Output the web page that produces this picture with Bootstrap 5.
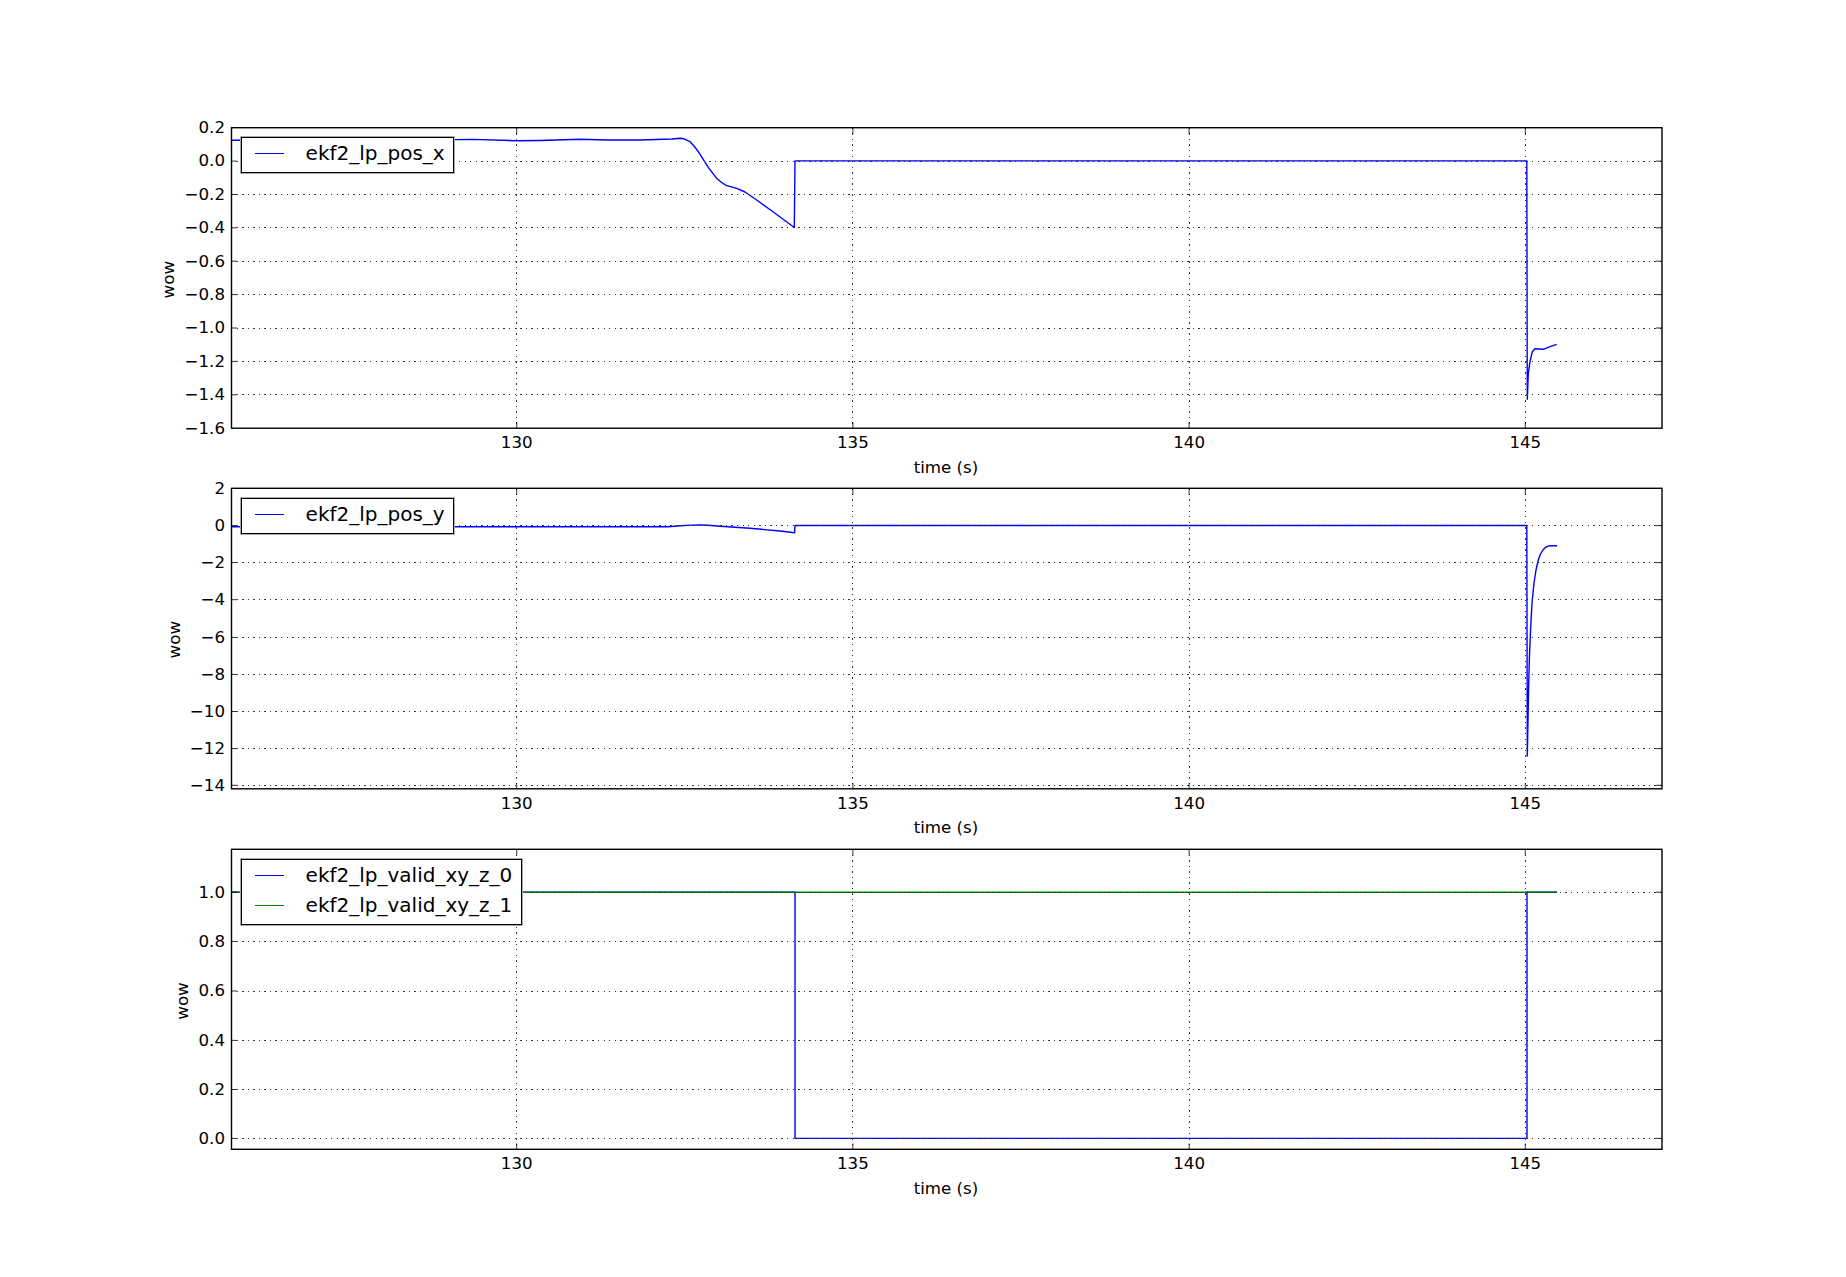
<!DOCTYPE html>
<html lang="en">
<head>
    <meta charset="UTF-8">
    <meta name="viewport" content="width=device-width, initial-scale=1.0">
    <title>ekf2 local position</title>
    <link href="https://cdn.jsdelivr.net/npm/bootstrap@5.3.0/dist/css/bootstrap.min.css" rel="stylesheet">
    <style>
        body {
            background: #fff;
        }
        .figure-page {
            width: 1846px;
            height: 1277px;
            padding-top: 127px;
        }
        .plot {
            width: 1846px;
            height: 361px;
        }
        .plot svg {
            display: block;
            overflow: visible;
        }
        .plot text {
            font-family: "DejaVu Sans", sans-serif;
            font-size: 16.67px;
            fill: #000;
        }
        .tick-y {
            text-anchor: end;
        }
        .tick-x, .axis-label {
            text-anchor: middle;
        }
        .grid {
            stroke: #333;
            stroke-width: 1;
            stroke-dasharray: 1.39 4.17;
            fill: none;
            shape-rendering: crispEdges;
        }
        .ticks {
            stroke: #000;
            stroke-width: .8;
            fill: none;
        }
        .frame {
            stroke: #000;
            stroke-width: 1.4;
            fill: none;
        }
        .trace {
            stroke-width: 1.4;
            fill: none;
            stroke-linejoin: round;
        }
        .trace-blue {
            stroke: #00f;
        }
        .trace-green {
            stroke: #008000;
        }
        .legend-box {
            top: 10px;
            left: 241px;
            padding: 2px 8.6px 2px 13px;
            background: #fff;
            border: 1px solid #000;
            box-shadow: 0 0 0 1px #aaa;
            font-family: "DejaVu Sans", sans-serif;
            font-size: 20px;
            color: #000;
        }
        .legend-row {
            height: 30px;
            padding-bottom: 3.4px;
            gap: 21.6px;
        }
        .legend-line {
            display: block;
            width: 29px;
            height: 1.4px;
        }
        .swatch-blue {
            background: #00f;
        }
        .swatch-green {
            background: #008000;
        }
    </style>
</head>
<body class="m-0">
    <main class="figure-page d-flex flex-column">

        <!-- ekf2_lp_pos_x -->
        <section class="plot position-relative">
            <svg width="1846" height="361" viewBox="0 127 1846 361">
                <path class="trace trace-blue" d="M231.5 140.3 L300 140 L453 139.6 L473 139.4 L516.7 140.7 L540 140.5 L580 139.3 L606.7 140 L640 140 L672 139 L680 138.2 L684 138.8 L690 141.7 L694 146 L698.3 151.7 L708.3 167.3 L716.7 178.3 L721 182 L726 185.3 L736.7 188.3 L745 192 L756.7 200 L773.3 212 L794.3 227.5 L795 160.9 L1526.8 160.9 L1527.3 399.3 L1528.3 373.3 L1530 361.7 L1532.3 351.7 L1535 348.7 L1543.3 349.3 L1550 346.7 L1556.7 344.3"/>
                <path class="grid" d="M231 161.1H1662M231 194.5H1662M231 227.8H1662M231 261.2H1662M231 294.6H1662M231 328H1662M231 361.4H1662M231 394.8H1662M516.7 127.7V428.2M852.9 127.7V428.2M1189.1 127.7V428.2M1525.3 127.7V428.2"/>
                <path class="ticks" d="M231 161.1h6M231 194.5h6M231 227.8h6M231 261.2h6M231 294.6h6M231 328h6M231 361.4h6M231 394.8h6M1662 161.1h-6M1662 194.5h-6M1662 227.8h-6M1662 261.2h-6M1662 294.6h-6M1662 328h-6M1662 361.4h-6M1662 394.8h-6M516.7 128v6M852.9 128v6M1189.1 128v6M1525.3 128v6M516.7 428v-6M852.9 428v-6M1189.1 428v-6M1525.3 428v-6"/>
                <rect class="frame" x="231.5" y="127.7" width="1430.5" height="300.5"/>
                <text class="tick-y" x="225" y="133">0.2</text>
                <text class="tick-y" x="225" y="166.4">0.0</text>
                <text class="tick-y" x="225" y="199.8">−0.2</text>
                <text class="tick-y" x="225" y="233.1">−0.4</text>
                <text class="tick-y" x="225" y="266.5">−0.6</text>
                <text class="tick-y" x="225" y="299.9">−0.8</text>
                <text class="tick-y" x="225" y="333.3">−1.0</text>
                <text class="tick-y" x="225" y="366.7">−1.2</text>
                <text class="tick-y" x="225" y="400.1">−1.4</text>
                <text class="tick-y" x="225" y="433.5">−1.6</text>
                <text class="tick-x" x="516.7" y="448.3">130</text>
                <text class="tick-x" x="852.9" y="448.3">135</text>
                <text class="tick-x" x="1189.1" y="448.3">140</text>
                <text class="tick-x" x="1525.3" y="448.3">145</text>
                <text class="axis-label" x="946" y="472.7">time (s)</text>
                <text class="axis-label" transform="translate(174.3 279.7) rotate(-90)">wow</text>
            </svg>
            <div class="legend-box position-absolute">
                <div class="legend-row d-flex align-items-center">
                    <span class="legend-line swatch-blue"></span>
                    <span>ekf2_lp_pos_x</span>
                </div>
            </div>
        </section>

        <!-- ekf2_lp_pos_y -->
        <section class="plot position-relative">
            <svg width="1846" height="361" viewBox="0 488 1846 361">
                <path class="trace trace-blue" d="M231.5 526.8 L668 526.8 L680 525.8 L692 525.1 L700 525 L708 525.2 L720 526.2 L750 528.3 L780 531 L794.6 532.8 L795 525.5 L1526.8 525.5 L1527.3 756 L1528 720 L1528.7 683 L1529.5 655 L1530.7 627 L1532 603 L1534 583 L1536 570 L1538.3 560 L1540.5 554 L1543.3 549.5 L1546 547 L1550 545.7 L1557 545.7"/>
                <path class="grid" d="M231 525.6H1662M231 562.6H1662M231 599.7H1662M231 637.4H1662M231 674.4H1662M231 711.5H1662M231 748.6H1662M231 785.3H1662M516.7 488.3V788.8M852.9 488.3V788.8M1189.1 488.3V788.8M1525.3 488.3V788.8"/>
                <path class="ticks" d="M231 525.6h6M231 562.6h6M231 599.7h6M231 637.4h6M231 674.4h6M231 711.5h6M231 748.6h6M231 785.3h6M1662 525.6h-6M1662 562.6h-6M1662 599.7h-6M1662 637.4h-6M1662 674.4h-6M1662 711.5h-6M1662 748.6h-6M1662 785.3h-6M516.7 489v6M852.9 489v6M1189.1 489v6M1525.3 489v6M516.7 789v-6M852.9 789v-6M1189.1 789v-6M1525.3 789v-6"/>
                <rect class="frame" x="231.5" y="488.3" width="1430.5" height="300.5"/>
                <text class="tick-y" x="225" y="493.8">2</text>
                <text class="tick-y" x="225" y="530.9">0</text>
                <text class="tick-y" x="225" y="567.9">−2</text>
                <text class="tick-y" x="225" y="605">−4</text>
                <text class="tick-y" x="225" y="642.7">−6</text>
                <text class="tick-y" x="225" y="679.7">−8</text>
                <text class="tick-y" x="225" y="716.8">−10</text>
                <text class="tick-y" x="225" y="753.9">−12</text>
                <text class="tick-y" x="225" y="790.6">−14</text>
                <text class="tick-x" x="516.7" y="809">130</text>
                <text class="tick-x" x="852.9" y="809">135</text>
                <text class="tick-x" x="1189.1" y="809">140</text>
                <text class="tick-x" x="1525.3" y="809">145</text>
                <text class="axis-label" x="946" y="833">time (s)</text>
                <text class="axis-label" transform="translate(179.7 639.7) rotate(-90)">wow</text>
            </svg>
            <div class="legend-box position-absolute">
                <div class="legend-row d-flex align-items-center">
                    <span class="legend-line swatch-blue"></span>
                    <span>ekf2_lp_pos_y</span>
                </div>
            </div>
        </section>

        <!-- ekf2_lp_valid_xy_z -->
        <section class="plot position-relative">
            <svg width="1846" height="361" viewBox="0 849 1846 361">
                <path class="trace trace-blue" d="M231.5 892.2 L795 892.2 L795 1138.4 L1527 1138.4 L1527 892.2 L1557 892.2"/>
                <path class="trace trace-green" d="M231.5 892.2 H1557"/>
                <path class="grid" d="M231 892.2H1662M231 941.4H1662M231 991H1662M231 1040.4H1662M231 1089.5H1662M231 1138.4H1662M516.7 849V1149.3M852.9 849V1149.3M1189.1 849V1149.3M1525.3 849V1149.3"/>
                <path class="ticks" d="M231 892.2h6M231 941.4h6M231 991h6M231 1040.4h6M231 1089.5h6M231 1138.4h6M1662 892.2h-6M1662 941.4h-6M1662 991h-6M1662 1040.4h-6M1662 1089.5h-6M1662 1138.4h-6M516.7 849.5v6M852.9 849.5v6M1189.1 849.5v6M1525.3 849.5v6M516.7 1149.5v-6M852.9 1149.5v-6M1189.1 1149.5v-6M1525.3 1149.5v-6"/>
                <rect class="frame" x="231.5" y="849.3" width="1430.5" height="300"/>
                <text class="tick-y" x="225" y="897.5">1.0</text>
                <text class="tick-y" x="225" y="946.7">0.8</text>
                <text class="tick-y" x="225" y="996.3">0.6</text>
                <text class="tick-y" x="225" y="1045.7">0.4</text>
                <text class="tick-y" x="225" y="1094.8">0.2</text>
                <text class="tick-y" x="225" y="1143.7">0.0</text>
                <text class="tick-x" x="516.7" y="1169.4">130</text>
                <text class="tick-x" x="852.9" y="1169.4">135</text>
                <text class="tick-x" x="1189.1" y="1169.4">140</text>
                <text class="tick-x" x="1525.3" y="1169.4">145</text>
                <text class="axis-label" x="946" y="1193.8">time (s)</text>
                <text class="axis-label" transform="translate(188 1001) rotate(-90)">wow</text>
            </svg>
            <div class="legend-box position-absolute">
                <div class="legend-row d-flex align-items-center">
                    <span class="legend-line swatch-blue"></span>
                    <span>ekf2_lp_valid_xy_z_0</span>
                </div>
                <div class="legend-row d-flex align-items-center">
                    <span class="legend-line swatch-green"></span>
                    <span>ekf2_lp_valid_xy_z_1</span>
                </div>
            </div>
        </section>
    </main>
    <script src="https://cdn.jsdelivr.net/npm/bootstrap@5.3.0/dist/js/bootstrap.bundle.min.js"></script>
</body>
</html>
